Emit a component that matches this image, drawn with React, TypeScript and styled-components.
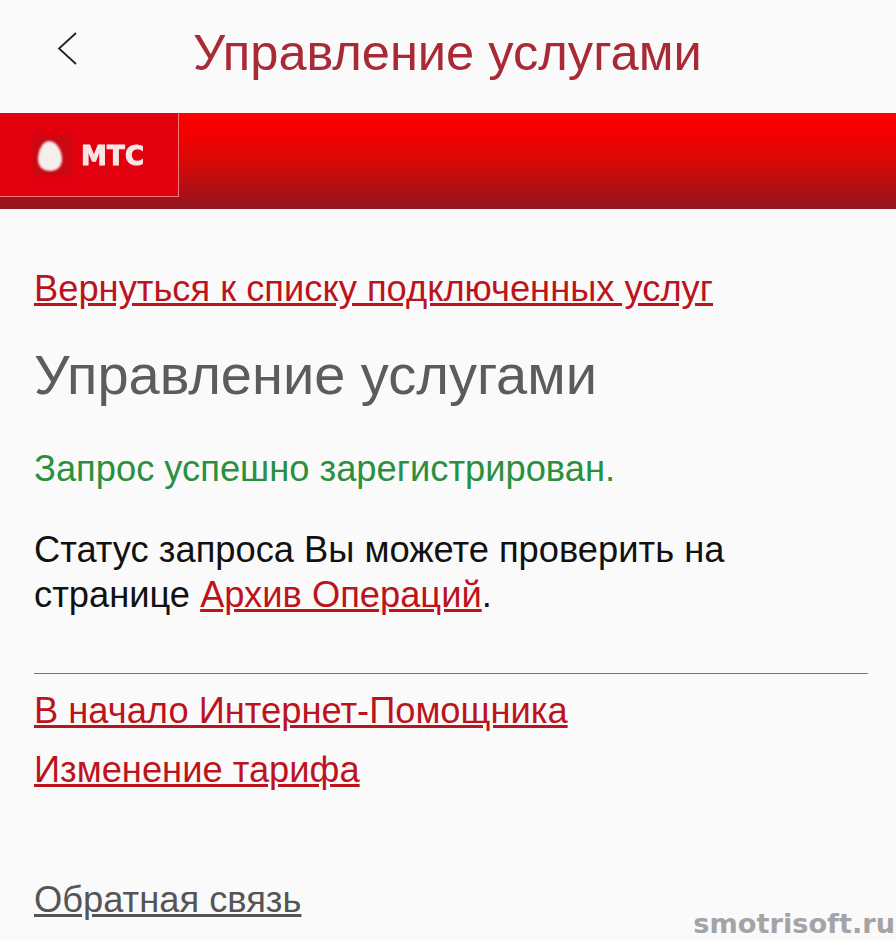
import React from 'react';
import styled, {createGlobalStyle} from "styled-components";

const Global = createGlobalStyle`
    html, body {
        margin: 0;
        padding: 0;
        background: #fafafb;
    }
    * {
        box-sizing: border-box;
    }
`

export default function App() {
    return (
        <Page>
            <Global/>
            <TopBar>
                <BackButton>
                    <svg width="24" height="36" viewBox="0 0 24 36" fill="none" stroke="#222" strokeWidth="1.8">
                        <path d="M20 2 L3 17.5 L20 33"/>
                    </svg>
                </BackButton>
                <TopTitle>Управление услугами</TopTitle>
            </TopBar>
            <RedBand>
                <LogoBox>
                    <LogoMark width="40" height="42" viewBox="0 0 40 42">
                        <rect x="1" y="1" width="38" height="40" fill="#c90812"/>
                        <path d="M17 6 C24 6 30 15 30 24 C30 32 25 36 18 36 C11 36 6 32 6 24 C6 15 11 6 17 6 Z" fill="#f6eeee"/>
                    </LogoMark>
                    <LogoText>МТС</LogoText>
                </LogoBox>
            </RedBand>
            <Content>
                <BackLink href="#">Вернуться к списку подключенных услуг</BackLink>
                <Heading>Управление услугами</Heading>
                <Success>Запрос успешно зарегистрирован.</Success>
                <Message>
                    Статус запроса Вы можете проверить на<br/>
                    странице <InlineLink href="#">Архив Операций</InlineLink>.
                </Message>
                <Divider/>
                <NavLink href="#">В начало Интернет-Помощника</NavLink>
                <NavLink href="#">Изменение тарифа</NavLink>
                <Feedback href="#">Обратная связь</Feedback>
            </Content>
            <Watermark>smotrisoft.ru</Watermark>
        </Page>
    );
}

const font = `"Liberation Sans", Arial, sans-serif`;

const Page = styled.div`
    position: relative;
    width: 896px;
    height: 940px;
    overflow: hidden;
    background: #fafafb;
    font-family: ${font};
`
const TopBar = styled.header`
    height: 113px;
    display: flex;
    align-items: flex-start;
    padding: 31px 0 0 56px;
`
const BackButton = styled.div`
    width: 24px;
    height: 36px;
`
const TopTitle = styled.h1`
    margin: -7px 0 0 113px;
    font-size: 50.6px;
    line-height: 58px;
    font-weight: 400;
    color: #a82a36;
`
const RedBand = styled.div`
    height: 96px;
    padding-bottom: 12px;
    background: linear-gradient(180deg, #f00 0%, #f40000 22%, #d40a0a 55%, #a01218 90%, #8f1a20 100%);
`
const LogoBox = styled.div`
    width: 179px;
    height: 84px;
    display: flex;
    align-items: center;
    gap: 9px;
    padding: 2px 0 0 32px;
    background: #e2000f;
    border-right: 1px solid #f47a7a;
    border-bottom: 1px solid #f47a7a;
`
const LogoMark = styled.svg`
    filter: blur(0.8px);
`
const LogoText = styled.span`
    font-family: "DejaVu Sans", sans-serif;
    font-size: 26px;
    font-weight: 700;
    color: #f8e6e6;
    letter-spacing: 0.2px;
    -webkit-text-stroke: 1px #f8e6e6;
    filter: blur(0.6px);
`
const Content = styled.main`
    display: flex;
    flex-direction: column;
    align-items: flex-start;
    padding: 59px 28px 0 34px;
`
const BackLink = styled.a`
    font-size: 36.3px;
    line-height: 42px;
    color: #bc141d;
`
const Heading = styled.h2`
    margin: 36px 0 0;
    font-size: 56px;
    line-height: 58px;
    font-weight: 400;
    color: #5c5c5c;
`
const Success = styled.p`
    margin: 44px 0 0;
    font-size: 36.3px;
    line-height: 42px;
    color: #2a9040;
`
const Message = styled.p`
    margin: 37px 0 0;
    font-size: 36.3px;
    line-height: 45px;
    color: #111;
`
const InlineLink = styled.a`
    color: #bc141d;
`
const Divider = styled.hr`
    width: 100%;
    height: 1px;
    margin: 56px 0 0;
    border: 0;
    background: #777;
`
const NavLink = styled.a`
    margin-top: 16px;
    font-size: 36.3px;
    line-height: 42px;
    color: #bc141d;
    & + & {
        margin-top: 17px;
    }
`
const Feedback = styled.a`
    margin-top: 88px;
    font-size: 36.3px;
    line-height: 42px;
    color: #555;
`
const Watermark = styled.div`
    position: absolute;
    right: 1px;
    bottom: 1px;
    font-family: "DejaVu Sans", sans-serif;
    font-size: 27.2px;
    font-weight: 700;
    color: #a4a4a4;
`
